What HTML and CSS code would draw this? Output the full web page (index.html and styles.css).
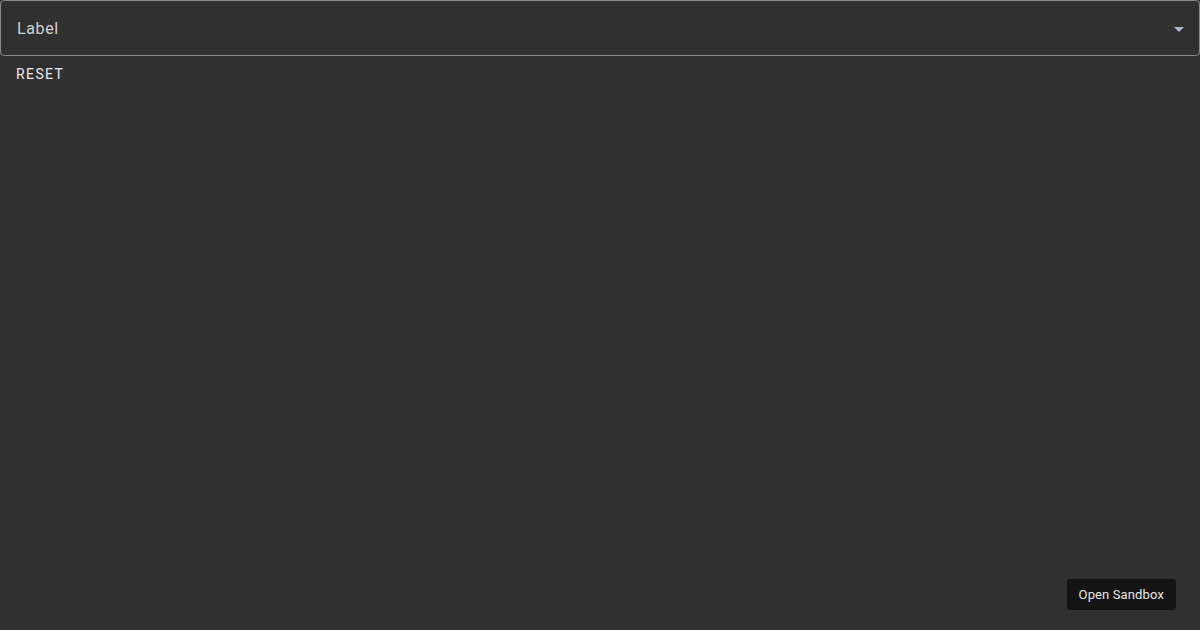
FILE: index.html
```html
<!DOCTYPE html>
<html>
<head>
<meta charset="utf-8">
<link rel="stylesheet" href="styles.css">
</head>
<body>
<div class="page">
  <div class="select">
    <span class="select-label">Label</span>
    <svg class="arrow" viewBox="0 0 24 24" width="24" height="24"><path d="M7 10l5 5 5-5z" fill="#a8b8d8"/></svg>
  </div>
  <div class="actions">
    <button class="reset">Reset</button>
  </div>
</div>
<button class="sandbox">Open Sandbox</button>
</body>
</html>
```

FILE: styles.css
```css
html, body {
  margin: 0;
  padding: 0;
  background: #303030;
  height: 100%;
  font-family: Roboto, "Liberation Sans", sans-serif;
}
.page {
  display: flex;
  flex-direction: column;
}
.select {
  height: 56px;
  box-sizing: border-box;
  border: 1px solid #8a8a8a;
  border-radius: 4px;
  display: flex;
  align-items: center;
  padding: 0 8px 0 16px;
}
.select-label {
  flex: 1;
  font-size: 16px;
  color: rgba(255,255,255,0.78);
  letter-spacing: 0.04em;
}
.arrow {
  display: block;
  margin-top: 1px;
}
.actions {
  display: flex;
  padding-left: 8px;
}
.reset {
  background: none;
  border: none;
  color: #e8e8e8;
  font-family: Roboto, "Liberation Sans", sans-serif;
  font-size: 14px;
  font-weight: 400;
  letter-spacing: 0.1em;
  text-transform: uppercase;
  padding: 6px 8px;
  line-height: 24px;
}
.sandbox {
  position: fixed;
  right: 24px;
  bottom: 20px;
  background: #141414;
  color: #e6e6e6;
  border: none;
  border-radius: 3px;
  font-family: Roboto, "Liberation Sans", sans-serif;
  font-size: 13px;
  letter-spacing: 0.01em;
  height: 31px;
  padding: 0 12px;
}
```
